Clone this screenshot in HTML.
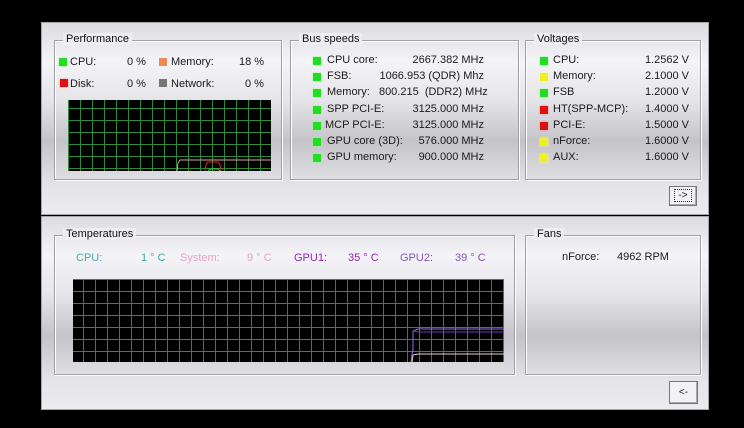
<!DOCTYPE html>
<html><head><style>
body{margin:0;width:744px;height:428px;background:#000;position:relative;overflow:hidden;font-family:"Liberation Sans",sans-serif;font-size:11px;color:#1a1a1a}
.pan{position:absolute;left:41px;width:668px;background:linear-gradient(#dcdce0 0%,#f4f4f8 20%,#e6e6ea 40%,#c4c4c8 62%,#e4e4e8 85%,#ececf0 100%);border:1px solid #a8a8ac;box-sizing:border-box}
.gb{position:absolute;border:1px solid #a0a0a4;box-shadow:inset 1px 1px 0 #fff,1px 1px 0 #fff}
.gt{position:absolute;top:-8px;left:8px;padding:0 3px;background:#eeeef2;color:#111;font-size:11px}
.t{position:absolute;white-space:nowrap}
.sq{position:absolute;width:8px;height:8px}
.g{background:#22dd22;box-shadow:0 0 2px #8f8}.y{background:#eeee22;box-shadow:0 0 2px #ff8}.r{background:#dd1111;box-shadow:0 0 2px #f88}
.btn{position:absolute;border:1px solid #777;background:#f2f2f4;box-shadow:inset -1px -1px 0 #aaa;font-size:10px;text-align:center;line-height:18px}
.graph{position:absolute;background-color:#000;background-image:linear-gradient(90deg,#2f8a38 1px,transparent 1px),linear-gradient(#2f8a38 1px,transparent 1px);background-size:12px 12px}
</style></head><body>
<div class="pan" style="top:22px;height:193px"></div>
<div class="pan" style="top:216px;height:194px"></div>

<div class="gb" style="left:54px;top:40px;width:226px;height:138px"><span class="gt">Performance</span></div>
<div class="sq g" style="left:59px;top:58px"></div><span class="t" style="left:70px;top:56px">CPU:</span><span class="t" style="left:127px;top:56px">0 %</span>
<div class="sq" style="left:159px;top:58px;background:#ee8855"></div><span class="t" style="left:171px;top:56px">Memory:</span><span class="t" style="left:239px;top:56px">18 %</span>
<div class="sq r" style="left:60px;top:79px"></div><span class="t" style="left:70px;top:78px">Disk:</span><span class="t" style="left:127px;top:78px">0 %</span>
<div class="sq" style="left:159px;top:79px;background:#777"></div><span class="t" style="left:171px;top:78px">Network:</span><span class="t" style="left:245px;top:78px">0 %</span>
<div class="graph" style="left:68px;top:100px;width:203px;height:71px;background-position:0 -4px">
<svg width="203" height="71" style="position:absolute;left:0;top:0"><polyline points="109,71 110,63 112,60 203,60" fill="none" stroke="#d8a0a0"/><polyline points="137,71 138,65 140,62 150,62 152,65 153,71" fill="none" stroke="#dd2222"/><polyline points="140,71 142,69 150,69 152,71" fill="none" stroke="#33dd33"/></svg></div>

<div class="gb" style="left:290px;top:40px;width:227px;height:138px"><span class="gt">Bus speeds</span></div>
<div class="sq g" style="left:313px;top:57px"></div><span class="t" style="left:327px;top:54px">CPU core:</span><span class="t" style="left:484px;top:54px;transform:translateX(-100%)">2667.382 MHz</span>
<div class="sq g" style="left:313px;top:73px"></div><span class="t" style="left:327px;top:70px">FSB:</span><span class="t" style="left:484px;top:70px;transform:translateX(-100%)">1066.953 (QDR) Mhz</span>
<div class="sq g" style="left:313px;top:89px"></div><span class="t" style="left:327px;top:86px">Memory:&nbsp;&nbsp; 800.215&nbsp; (DDR2) MHz</span>
<div class="sq g" style="left:313px;top:106px"></div><span class="t" style="left:327px;top:103px">SPP PCI-E:</span><span class="t" style="left:484px;top:103px;transform:translateX(-100%)">3125.000 MHz</span>
<div class="sq g" style="left:313px;top:122px"></div><span class="t" style="left:325px;top:119px">MCP PCI-E:</span><span class="t" style="left:484px;top:119px;transform:translateX(-100%)">3125.000 MHz</span>
<div class="sq g" style="left:313px;top:138px"></div><span class="t" style="left:327px;top:135px">GPU core (3D):</span><span class="t" style="left:484px;top:135px;transform:translateX(-100%)">576.000 MHz</span>
<div class="sq g" style="left:313px;top:154px"></div><span class="t" style="left:327px;top:151px">GPU memory:</span><span class="t" style="left:484px;top:151px;transform:translateX(-100%)">900.000 MHz</span>

<div class="gb" style="left:525px;top:40px;width:174px;height:138px"><span class="gt">Voltages</span></div>
<div class="sq g" style="left:540px;top:57px"></div><span class="t" style="left:553px;top:54px">CPU:</span><span class="t" style="left:689px;top:54px;transform:translateX(-100%)">1.2562 V</span>
<div class="sq y" style="left:540px;top:73px"></div><span class="t" style="left:553px;top:70px">Memory:</span><span class="t" style="left:689px;top:70px;transform:translateX(-100%)">2.1000 V</span>
<div class="sq g" style="left:540px;top:89px"></div><span class="t" style="left:553px;top:86px">FSB</span><span class="t" style="left:689px;top:86px;transform:translateX(-100%)">1.2000 V</span>
<div class="sq r" style="left:540px;top:106px"></div><span class="t" style="left:553px;top:103px">HT(SPP-MCP):</span><span class="t" style="left:689px;top:103px;transform:translateX(-100%)">1.4000 V</span>
<div class="sq r" style="left:540px;top:122px"></div><span class="t" style="left:553px;top:119px">PCI-E:</span><span class="t" style="left:689px;top:119px;transform:translateX(-100%)">1.5000 V</span>
<div class="sq y" style="left:540px;top:138px"></div><span class="t" style="left:553px;top:135px">nForce:</span><span class="t" style="left:689px;top:135px;transform:translateX(-100%)">1.6000 V</span>
<div class="sq y" style="left:540px;top:154px"></div><span class="t" style="left:553px;top:151px">AUX:</span><span class="t" style="left:689px;top:151px;transform:translateX(-100%)">1.6000 V</span>

<div class="btn" style="left:669px;top:186px;width:28px;height:20px;box-sizing:border-box"><span style="border:1px dotted #333;padding:0 3px">-&gt;</span></div>

<div class="gb" style="left:54px;top:235px;width:459px;height:138px"><span class="gt">Temperatures</span></div>
<span class="t" style="left:76px;top:252px;color:#44aaaa">CPU:</span><span class="t" style="left:141px;top:252px;color:#44aaaa">1 ° C</span>
<span class="t" style="left:180px;top:252px;color:#e8a0c8">System:</span><span class="t" style="left:247px;top:252px;color:#e8a0c8">9 ° C</span>
<span class="t" style="left:294px;top:252px;color:#9922bb">GPU1:</span><span class="t" style="left:348px;top:252px;color:#9922bb">35 ° C</span>
<span class="t" style="left:400px;top:252px;color:#8855bb">GPU2:</span><span class="t" style="left:455px;top:252px;color:#8855bb">39 ° C</span>
<div class="graph" style="left:73px;top:279px;width:431px;height:83px;background-position:-2px 0">
<svg width="431" height="83" style="position:absolute;left:0;top:0"><polyline points="338,83 339,75 340,71 340,52 345,50 431,50" fill="none" stroke="#9966ee"/><polyline points="340,52 345,53 431,53" fill="none" stroke="#6633cc"/><polyline points="339,83 340,76 345,75 431,75" fill="none" stroke="#e8d0d8"/></svg></div>

<div class="gb" style="left:525px;top:235px;width:174px;height:138px"><span class="gt">Fans</span></div>
<span class="t" style="left:562px;top:251px">nForce:</span><span class="t" style="left:617px;top:251px">4962 RPM</span>

<div class="btn" style="left:669px;top:381px;width:29px;height:23px;box-sizing:border-box;line-height:21px">&lt;-</div>
</body></html>
